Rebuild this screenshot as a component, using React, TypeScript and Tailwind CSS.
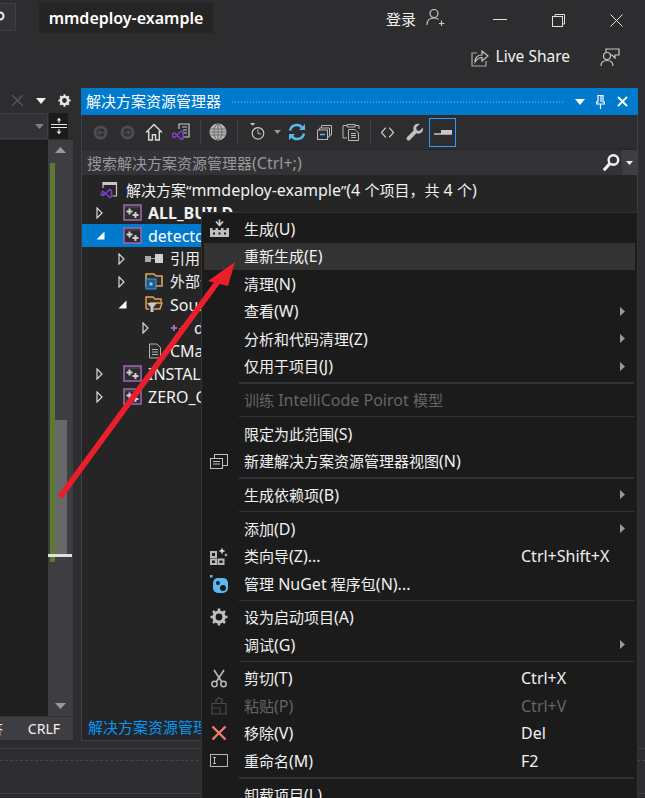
import React from "react";

const Mixed = ({ text }: { text: string }) => (
  <>
    {text.split(/([\u0000-\u02ff]+)/).map((part, i) =>
      i % 2 === 1 ? (
        <span key={i} className="text-[16px]">{part}</span>
      ) : (
        <React.Fragment key={i}>{part}</React.Fragment>
      )
    )}
  </>
);

const Tri = ({ open }: { open?: boolean }) =>
  open ? (
    <svg width="9" height="9" viewBox="0 0 9 9"><path d="M8.5 .5V8.5H.5Z" fill="#fff" /></svg>
  ) : (
    <svg width="7" height="12" viewBox="0 0 7 12"><path d="M1 1L6 6L1 11Z" fill="#252526" stroke="#d8d8d8" strokeWidth="1.2" /></svg>
  );

const ProjectIcon = () => (
  <svg width="19" height="17" viewBox="0 0 19 17">
    <rect x="1" y="1" width="17" height="15" fill="#2d2d30" stroke="#a765b6" strokeWidth="1.5" />
    <rect x="2" y="2" width="15" height="2" fill="#3f3f42" />
    <path d="M6.5 4.5v6M3.5 7.5h6M12.5 8v6M9.5 11h6" stroke="#d0d0d0" strokeWidth="2" />
  </svg>
);

const VsMark = ({ c = "#7b3fc4" }: { c?: string }) => (
  <path d="M1 11.5L3 10.5L5.5 12.5L10 8.5L11.5 9.5V15.5L10 16.5L5.5 12.5M5.5 12.5L3 14.5L1 13.5Z" fill="none" stroke={c} strokeWidth="1.6" />
);

const SolutionIcon = () => (
  <svg width="18" height="18" viewBox="0 0 18 18">
    <path d="M3 7V1.5H16.5V15H12.5" fill="none" stroke="#c8c8c8" strokeWidth="1.2" />
    <rect x="3" y="1" width="14" height="3" fill="#c8c8c8" />
    <VsMark />
  </svg>
);

const tree = [
  { key: "a", pad: "pl-[14px]", exp: "closed", icon: "project", label: "ALL_BUILD", bold: true },
  { key: "b", pad: "pl-[14px]", exp: "open", icon: "project", label: "detector", sel: true },
  { key: "c", pad: "pl-[36px]", exp: "closed", icon: "ref", label: "引用" },
  { key: "d", pad: "pl-[36px]", exp: "closed", icon: "ext", label: "外部依赖项" },
  { key: "e", pad: "pl-[36px]", exp: "open", icon: "filter", label: "Source Files" },
  { key: "f", pad: "pl-[60px]", exp: "closed", icon: "cpp", label: "detector.cpp" },
  { key: "g", pad: "pl-[36px]", exp: "none", icon: "doc", label: "CMakeLists.txt" },
  { key: "h", pad: "pl-[14px]", exp: "closed", icon: "project", label: "INSTALL" },
  { key: "i", pad: "pl-[14px]", exp: "closed", icon: "project", label: "ZERO_CHECK" },
];

const TreeIcon = ({ t }: { t: string }) => {
  if (t === "project") return <ProjectIcon />;
  if (t === "ref")
    return (
      <svg width="18" height="12" viewBox="0 0 18 12">
        <rect x="0" y="3" width="6" height="6" fill="#a8a8a8" />
        <rect x="10" y="1" width="8" height="9" fill="#d0d0d0" />
        <path d="M6 5.5h4" stroke="#a8a8a8" />
      </svg>
    );
  if (t === "ext")
    return (
      <svg width="18" height="17" viewBox="0 0 18 17">
        <path d="M1 1H9L11 3H17V13H1Z" fill="#2d2d30" stroke="#d9a860" strokeWidth="1.6" />
        <rect x="1" y="6" width="10" height="10" fill="#1e5a85" stroke="#3f9bd8" />
        <rect x="4.5" y="9.5" width="3" height="3" fill="#8ec8ee" />
      </svg>
    );
  if (t === "filter")
    return (
      <svg width="18" height="17" viewBox="0 0 18 17">
        <path d="M1 13V1H8L10 3H16V6M1 13H4M9 13H15L17 7H5" fill="#3a3020" stroke="#d9a860" strokeWidth="1.4" />
        <path d="M2 7H12L8.5 11V16H5.5V11Z" fill="#c8c8c8" />
      </svg>
    );
  if (t === "cpp")
    return (
      <svg width="19" height="12" viewBox="0 0 19 12">
        <path d="M5 3v6M2 6h6M13 4v6M10 7h6" stroke="#a866b8" strokeWidth="2" />
      </svg>
    );
  return (
    <svg className="ml-[3px]" width="14" height="16" viewBox="0 0 14 16">
      <path d="M1.5 1H9L12.5 4.5V15H1.5Z" fill="#2d2d30" stroke="#b0b0b0" />
      <path d="M4 6.5H10M4 9H10M4 11.5H10" stroke="#b0b0b0" />
    </svg>
  );
};

const MIcon = ({ t }: { t?: string }) => {
  switch (t) {
    case "build":
      return (
        <svg width="19" height="19" viewBox="0 0 19 19">
          <path d="M9.5 .5V5M6 2.5L9.5 6.5L13 2.5" fill="none" stroke="#c8c8c8" strokeWidth="1.8" />
          <path d="M0 18V9H2.5V11H5.5V9H8V11H11V9H13.5V11H16.5V9H19V18Z" fill="#c0c0c0" />
          <path d="M3 13.5h2v2H3zM8.5 13.5h2v2h-2zM14 13.5h2v2h-2z" fill="#1b1b1c" />
        </svg>
      );
    case "view":
      return (
        <svg width="18" height="16" viewBox="0 0 18 16">
          <rect x="4.5" y="1.5" width="13" height="11" fill="#1b1b1c" stroke="#c0c0c0" />
          <rect x="0.5" y="5.5" width="12" height="10" fill="#1b1b1c" stroke="#c0c0c0" />
          <path d="M3 8.5H10M3 11H10" stroke="#c0c0c0" />
        </svg>
      );
    case "wizard":
      return (
        <svg width="18" height="18" viewBox="0 0 18 18">
          <rect x="0" y="4" width="7" height="7" fill="#b8b8b8" />
          <rect x="0" y="11.5" width="7" height="6.5" fill="#b8b8b8" />
          <rect x="7.5" y="11.5" width="7" height="6.5" fill="#b8b8b8" />
          <path d="M2 6h3v3H2zM2 13.5h3v2.5H2zM9.5 13.5h3v2.5h-3z" fill="#1b1b1c" />
          <path d="M12 0.5L13 3L15.5 4L13 5L12 7.5L11 5L8.5 4L11 3Z" fill="#d8d8d8" />
          <path d="M16 6l.6 1.4 1.4.6-1.4.6-.6 1.4-.6-1.4-1.4-.6 1.4-.6z" fill="#d8d8d8" />
        </svg>
      );
    case "nuget":
      return (
        <svg width="18" height="18" viewBox="0 0 18 18">
          <rect x="0" y="0" width="2.5" height="2.5" fill="#5cb8f0" />
          <rect x="3" y="3" width="15" height="15" rx="5" fill="#5cb8f0" />
          <circle cx="8" cy="8" r="2" fill="#1b1b1c" />
          <circle cx="13" cy="13" r="3" fill="#1b1b1c" />
        </svg>
      );
    case "gear":
      return (
        <svg width="18" height="18" viewBox="0 0 18 18">
          <circle cx="9" cy="9" r="5" fill="none" stroke="#c0c0c0" strokeWidth="3.2" />
          <path d="M9 0.5V3M9 15V17.5M0.5 9H3M15 9H17.5M3 3L4.8 4.8M13.2 13.2L15 15M15 3L13.2 4.8M4.8 13.2L3 15" stroke="#c0c0c0" strokeWidth="2.6" />
        </svg>
      );
    case "cut":
      return (
        <svg width="16" height="19" viewBox="0 0 16 19">
          <path d="M3 1L10.5 12.5M13 1L5.5 12.5" stroke="#b8b8b8" strokeWidth="1.7" />
          <circle cx="3.5" cy="15" r="2.7" fill="none" stroke="#b8b8b8" strokeWidth="1.5" />
          <circle cx="12.5" cy="15" r="2.7" fill="none" stroke="#b8b8b8" strokeWidth="1.5" />
        </svg>
      );
    case "paste":
      return (
        <svg width="16" height="18" viewBox="0 0 16 18">
          <path d="M1 6.5H15V17H1ZM5 6V3L8 0.5L11 3V6M1 11H9V17" fill="none" stroke="#4a4a4c" strokeWidth="1.2" />
        </svg>
      );
    case "remove":
      return (
        <svg width="16" height="16" viewBox="0 0 16 16">
          <path d="M1.5 1.5L14.5 14.5M14.5 1.5L1.5 14.5" stroke="#ee7f6b" strokeWidth="2.4" />
        </svg>
      );
    case "rename":
      return (
        <svg width="18" height="13" viewBox="0 0 18 13">
          <rect x="0.5" y="0.5" width="17" height="12" fill="none" stroke="#b8b8b8" />
          <path d="M3 3.5H6M3 9.5H6M4.5 3.5V9.5" stroke="#b8b8b8" />
        </svg>
      );
    default:
      return null;
  }
};

type M =
  | { sep: "thin" | "thick" }
  | { label: string; icon?: string; shortcut?: string; arrow?: boolean; disabled?: boolean; hover?: boolean };

const menu: M[] = [
  { label: "生成(U)", icon: "build" },
  { label: "重新生成(E)", hover: true },
  { label: "清理(N)" },
  { label: "查看(W)", arrow: true },
  { label: "分析和代码清理(Z)", arrow: true },
  { label: "仅用于项目(J)", arrow: true },
  { sep: "thick" },
  { label: "训练 IntelliCode Poirot 模型", disabled: true },
  { sep: "thin" },
  { label: "限定为此范围(S)" },
  { label: "新建解决方案资源管理器视图(N)", icon: "view" },
  { sep: "thick" },
  { label: "生成依赖项(B)", arrow: true },
  { sep: "thin" },
  { label: "添加(D)", arrow: true },
  { label: "类向导(Z)...", icon: "wizard", shortcut: "Ctrl+Shift+X" },
  { label: "管理 NuGet 程序包(N)...", icon: "nuget" },
  { sep: "thin" },
  { label: "设为启动项目(A)", icon: "gear" },
  { label: "调试(G)", arrow: true },
  { sep: "thin" },
  { label: "剪切(T)", icon: "cut", shortcut: "Ctrl+X" },
  { label: "粘贴(P)", icon: "paste", shortcut: "Ctrl+V", disabled: true },
  { label: "移除(V)", icon: "remove", shortcut: "Del" },
  { label: "重命名(M)", icon: "rename", shortcut: "F2" },
  { sep: "thick" },
  { label: "卸载项目(L)" },
];

const ToolSep = () => <div className="w-px h-[24px] bg-[#3f3f46]" />;

export default function App() {
  return (
    <div className="relative w-[645px] h-[798px] overflow-hidden bg-[#2d2d30] flex flex-col text-[#f1f1f1] text-[15px] leading-none font-['Noto_Sans','Noto_Sans_CJK_SC',sans-serif]">
      {/* title bar */}
      <div className="h-[42px] flex items-start shrink-0">
        <div className="mt-[3px] w-[16px] h-[28px] bg-[#333337] border border-[#3f3f46] border-l-0 flex items-center overflow-hidden">
          <svg className="shrink-0 -ml-[4px]" width="10" height="12" viewBox="0 0 10 12"><circle cx="4" cy="5" r="3.5" fill="none" stroke="#f1f1f1" strokeWidth="2" /></svg>
        </div>
        <div className="ml-[23px] mt-[3px] w-[174px] h-[30px] bg-[#252526] flex items-center justify-center font-semibold text-[16px] text-white whitespace-nowrap">mmdeploy-example</div>
        <div className="flex-1" />
        <div className="mt-[12px] text-[15px] text-[#f1f1f1]">登录</div>
        <svg className="ml-[10px] mt-[8px]" width="20" height="19" viewBox="0 0 20 19">
          <circle cx="8" cy="5.5" r="4" fill="none" stroke="#c8c8c8" strokeWidth="1.2" />
          <path d="M1 17C1 12 4 10 8 10C10 10 11.5 10.5 12.5 11.5M15.5 12.5V18M13 15.5H18.5" fill="none" stroke="#c8c8c8" strokeWidth="1.2" />
        </svg>
        <svg className="ml-[47px] mt-[19px]" width="14" height="2" viewBox="0 0 14 2"><path d="M0 .5H14" stroke="#e0e0e0" /></svg>
        <svg className="ml-[45px] mt-[14px]" width="13" height="13" viewBox="0 0 13 13">
          <path d="M3 2.5V.5H12.5V10H10.5" fill="none" stroke="#e0e0e0" />
          <rect x="0.5" y="2.5" width="10" height="10" fill="none" stroke="#e0e0e0" />
        </svg>
        <svg className="ml-[45px] mr-[22px] mt-[14px]" width="13" height="13" viewBox="0 0 13 13"><path d="M.5 .5L12.5 12.5M12.5 .5L.5 12.5" stroke="#e0e0e0" /></svg>
      </div>

      {/* command bar */}
      <div className="h-[45px] shrink-0 flex items-center justify-end pr-[25px] pb-[15px]">
        <svg width="18" height="19" viewBox="0 0 18 19">
          <path d="M6 5H1V18H15V13" fill="none" stroke="#a8a8a8" strokeWidth="1.2" />
          <path d="M4 14C4 9 7 7 11 7V3L17 8L11 13V9.5C8 9.5 6 11 4 14Z" fill="none" stroke="#c8c8c8" strokeWidth="1.2" />
        </svg>
        <span className="ml-[7px] text-[#f1f1f1] text-[15.5px]">Live Share</span>
        <svg className="ml-[30px]" width="20" height="19" viewBox="0 0 20 19">
          <circle cx="7" cy="8" r="3.5" fill="none" stroke="#c8c8c8" strokeWidth="1.2" />
          <path d="M1 18C1 14 4 12.5 7 12.5C10 12.5 13 14 13 18M6 4V1H19V7H15V10L12 7H11" fill="none" stroke="#c8c8c8" strokeWidth="1.2" />
        </svg>
      </div>

      {/* main */}
      <div className="h-[653px] shrink-0 flex">
        <div className="w-[73px] flex flex-col shrink-0">
          <div className="h-[26px] flex items-center pt-[1px]">
            <svg className="ml-[11px]" width="13" height="13" viewBox="0 0 13 13"><path d="M1 1L12 12M12 1L1 12" stroke="#555558" strokeWidth="1.5" /></svg>
            <svg className="ml-[12px]" width="10" height="6" viewBox="0 0 10 6"><path d="M0 0H10L5 6Z" fill="#f1f1f1" /></svg>
            <svg className="ml-[12px]" width="13" height="13" viewBox="0 0 18 18">
              <circle cx="9" cy="9" r="5" fill="none" stroke="#e8e8e8" strokeWidth="3.4" />
              <path d="M9 0.5V3M9 15V17.5M0.5 9H3M15 9H17.5M3 3L4.8 4.8M13.2 13.2L15 15M15 3L13.2 4.8M4.8 13.2L3 15" stroke="#e8e8e8" strokeWidth="2.8" />
            </svg>
          </div>
          <div className="h-[27px] flex">
            <div className="w-[48px] h-[26px] bg-[#333337] border border-[#3f3f46] border-l-0 flex items-center justify-end pr-[3px]">
              <svg width="9" height="5" viewBox="0 0 9 5"><path d="M0 0H9L4.5 5Z" fill="#808080" /></svg>
            </div>
            <div className="ml-px w-[19px] h-[26px] bg-[#1b1b1c] flex items-center justify-center">
              <svg width="16" height="18" viewBox="0 0 16 18">
                <path d="M0 7.5H16M0 10.5H16" stroke="#e8e8e8" />
                <path d="M8 1V6M8 12V17" stroke="#e8e8e8" />
                <path d="M5.5 3.5L8 1L10.5 3.5ZM5.5 14.5L8 17L10.5 14.5Z" fill="#e8e8e8" />
              </svg>
            </div>
          </div>
          <div className="flex-1 flex min-h-0">
            <div className="w-[48px] bg-[#1e1e1e]" />
            <div className="relative flex-1 bg-[#3e3e42] flex flex-col items-center justify-between py-[7px]">
              <svg width="11" height="6" viewBox="0 0 11 6"><path d="M0 6L5.5 0L11 6Z" fill="#999999" /></svg>
              <svg width="11" height="6" viewBox="0 0 11 6"><path d="M0 0L5.5 6L11 0Z" fill="#999999" /></svg>
              <div className="absolute left-[2px] top-[23px] w-[5px] h-[399px] bg-[#5a7a32]" />
              <div className="absolute left-[7px] top-[280px] w-[12px] h-[135px] bg-[#686868]" />
              <div className="absolute left-0 top-[414px] w-[24px] h-[3px] bg-[#e0e0e0]" />
            </div>
          </div>
          <div className="h-[24px] bg-[#3e3e42] border-t border-[#333337] flex items-center justify-between pr-[13px] text-[14px] text-[#f1f1f1]">
            <span className="-ml-[11px] w-[14px] overflow-hidden whitespace-nowrap">答</span>
            <span>CRLF</span>
          </div>
        </div>

        <div className="ml-[8px] w-[557px] shrink-0 flex flex-col border border-[#3f3f46] border-t-0 h-[653px] mt-px bg-[#252526]">
          <div className="h-[27px] -mx-px shrink-0 bg-[#007acc] flex items-center pl-[5px] text-white text-[15px] whitespace-nowrap">
            <span className="shrink-0">解决方案资源管理器</span>
            <div className="ml-[10px] w-[334px] shrink-0 h-[4px] bg-[radial-gradient(#3f9fdd_1px,transparent_1px)] bg-[length:3px_4px]" />
            <svg className="ml-[10px] shrink-0" width="10" height="6" viewBox="0 0 10 6"><path d="M0 0H10L5 6Z" fill="#fff" /></svg>
            <svg className="ml-[11px] shrink-0" width="9" height="14" viewBox="0 0 9 14"><path d="M2 .5H7V7H8.5V9H.5V7H2ZM4.5 9V14M5 1V7" fill="none" stroke="#fff" strokeWidth="1.2" /></svg>
            <svg className="ml-[12px] shrink-0" width="11" height="11" viewBox="0 0 11 11"><path d="M1 1L10 10M10 1L1 10" stroke="#fff" strokeWidth="1.8" /></svg>
          </div>

          <div className="h-[34px] shrink-0 bg-[#2d2d30] flex items-center">
            <svg className="ml-[11px]" width="15" height="15" viewBox="0 0 15 15">
              <circle cx="7.5" cy="7.5" r="5.5" fill="none" stroke="#4d4d50" strokeWidth="3" />
              <path d="M11 7.5H5M7.5 5L5 7.5L7.5 10" fill="none" stroke="#4d4d50" strokeWidth="1.5" />
            </svg>
            <svg className="ml-[12px]" width="15" height="15" viewBox="0 0 15 15">
              <circle cx="7.5" cy="7.5" r="5.5" fill="none" stroke="#4d4d50" strokeWidth="3" />
              <path d="M4 7.5H10M7.5 5L10 7.5L7.5 10" fill="none" stroke="#4d4d50" strokeWidth="1.5" />
            </svg>
            <svg className="ml-[10px]" width="18" height="18" viewBox="0 0 17 17">
              <path d="M1 9L8.5 1.5L16 9M3.5 7.5V16H7V11H10V16H13.5V7.5" fill="none" stroke="#d8d8d8" strokeWidth="1.4" />
            </svg>
            <svg className="ml-[9px]" width="18" height="18" viewBox="0 0 18 18">
              <path d="M7 6V1H17V14H11" fill="none" stroke="#c8c8c8" strokeWidth="1.2" />
              <path d="M10 4H15M11 7H15M11 10H15" stroke="#c8c8c8" />
              <path d="M.5 11L2.5 10L5 12L9.5 8L11 9V15.5L9.5 16.5L5 12.5L2.5 14.5L.5 13.5Z" fill="none" stroke="#7b3fc4" strokeWidth="1.6" />
            </svg>
            <div className="ml-[10px]"><ToolSep /></div>
            <svg className="ml-[8px]" width="18" height="18" viewBox="0 0 18 18">
              <circle cx="9" cy="9" r="8.5" fill="#b8b8b8" />
              <ellipse cx="9" cy="9" rx="4" ry="8" fill="none" stroke="#6a6a6a" />
              <path d="M1 6H17M1 9H17M1 12H17M9 1V17" stroke="#6a6a6a" />
            </svg>
            <div className="ml-[10px]"><ToolSep /></div>
            <svg className="ml-[12px]" width="16" height="20" viewBox="0 0 18 20">
              <path d="M0 0H6L3 3Z" fill="#c8c8c8" />
              <circle cx="9" cy="11.5" r="6.5" fill="none" stroke="#c8c8c8" strokeWidth="1.3" />
              <path d="M9 7V12H12.5" fill="none" stroke="#c8c8c8" />
            </svg>
            <svg className="ml-[8px]" width="7" height="4" viewBox="0 0 7 4"><path d="M0 0H7L3.5 4Z" fill="#999" /></svg>
            <svg className="ml-[7px]" width="18" height="18" viewBox="0 0 18 18">
              <path d="M2 7.5C3 3.5 6 2 9 2C11 2 13 3 14 4.5M16 10.5C15 14.5 12 16 9 16C7 16 5 15 4 13.5" fill="none" stroke="#5cb8f0" strokeWidth="2.6" />
              <path d="M17 1V7H11ZM1 17V11H7Z" fill="#5cb8f0" />
            </svg>
            <svg className="ml-[11px]" width="15" height="15" viewBox="0 0 15 15">
              <path d="M4.5 3V.5H14.5V10H12.5M2.5 5V3H12.5V12H11" fill="none" stroke="#b8b8b8" />
              <rect x="0.5" y="5" width="10" height="9.5" fill="#2d2d30" stroke="#b8b8b8" />
              <path d="M3 9.5H8" stroke="#5cb8f0" strokeWidth="1.5" />
            </svg>
            <svg className="ml-[10px]" width="18" height="18" viewBox="0 0 18 18">
              <path d="M5 15H1V2.5H5M13 2.5H17V6" fill="none" stroke="#b8b8b8" />
              <path d="M5 1.5H13V4H5Z" fill="none" stroke="#b8b8b8" />
              <path d="M6.5 6.5H13L16.5 10V17.5H6.5Z" fill="#2d2d30" stroke="#b8b8b8" />
              <path d="M9 10.5H14M9 12.5H14M9 14.5H14" stroke="#b8b8b8" />
            </svg>
            <div className="ml-[10px]"><ToolSep /></div>
            <svg className="ml-[9px]" width="15" height="11" viewBox="0 0 12 10"><path d="M4.5 .5L.5 5L4.5 9.5M7.5 .5L11.5 5L7.5 9.5" fill="none" stroke="#d0d0d0" strokeWidth="1.1" /></svg>
            <svg className="ml-[11px]" width="18" height="18" viewBox="0 0 16 16">
              <path d="M15 4L12 7L9.5 6.5L9 4L12 1C9.5 .2 6.5 1.5 6.5 5C6.5 5.7 6.6 6.2 6.8 6.7L1 12.5C.3 13.2 .3 14.2 1 15C1.7 15.7 2.8 15.7 3.5 15L9.3 9.2C12.5 10.3 16 8 15 4Z" fill="#c0c0c0" />
            </svg>
            <div className="ml-[5px] w-[27px] h-[29px] border border-[#3399ff] flex items-end justify-center pb-[11px]">
              <svg width="18" height="5" viewBox="0 0 18 5"><path d="M0 4H18" stroke="#c8c8c8" strokeWidth="1.5" /><rect x="7" y="0" width="11" height="4" fill="#c8c8c8" /></svg>
            </div>
          </div>

          <div className="h-[27px] shrink-0 bg-[#333337] border-y border-[#252526] flex items-center pl-[5px] text-[15px] text-[#999999]">
            <span className="flex-1"><Mixed text="搜索解决方案资源管理器(Ctrl+;)" /></span>
            <svg width="18" height="18" viewBox="0 0 14 15"><circle cx="9" cy="5" r="4" fill="none" stroke="#f1f1f1" strokeWidth="2" /><path d="M6 8L1 13.5" stroke="#f1f1f1" strokeWidth="2.6" /></svg>
            <div className="ml-[2px] w-[15px] self-stretch bg-[#3e3e42] flex items-center justify-center">
              <svg width="7" height="4" viewBox="0 0 7 4"><path d="M0 0H7L3.5 4Z" fill="#f1f1f1" /></svg>
            </div>
          </div>

          <div className="flex-1 min-h-0 flex flex-col pt-[2px]">
            <div className="h-[23px] flex items-center pl-[18px] text-[15px] text-[#f1f1f1] whitespace-nowrap">
              <SolutionIcon />
              <span className="ml-[8px]"><Mixed text="解决方案“mmdeploy-example”(4 个项目，共 4 个)" /></span>
            </div>
            {tree.map((r) => (
              <div key={r.key} className={`h-[23px] shrink-0 flex items-center whitespace-nowrap ${r.pad} ${r.sel ? "bg-[#007acc] text-white" : "text-[#f1f1f1]"} ${r.bold ? "font-bold" : ""}`}>
                <div className="w-[9px] flex justify-start">{r.exp === "none" ? null : <Tri open={r.exp === "open"} />}</div>
                <div className="ml-[18px] w-[19px] flex justify-start"><TreeIcon t={r.icon} /></div>
                <span className="ml-[6px]"><Mixed text={r.label} /></span>
              </div>
            ))}
            <div className="mt-auto h-[26px] flex items-center pl-[6px] text-[15px] text-[#0097fb] whitespace-nowrap">解决方案资源管理器</div>
          </div>
        </div>
      </div>

      {/* lower panel */}
      <div className="flex-1 flex flex-col pt-[8px]">
        <div className="h-px bg-[#3f3f46]" />
        <div className="mt-[11px] border-t border-dashed border-[#46464a]" />
        <div className="mt-[32px] h-px bg-[#3f3f46]" />
      </div>

      {/* context menu */}
      <div className="absolute left-[201px] top-[212px] w-[437px] h-[600px] bg-[#1b1b1c] border border-[#333337] pt-[2px] px-[2px] text-[#f1f1f1]">
        {menu.map((m, i) =>
          "sep" in m ? (
            <div key={i} className="h-[6.2px] flex items-center pl-[35px] pr-[1px]">
              <div className={`w-full ${m.sep === "thick" ? "h-[2px]" : "h-px"} bg-[#333337]`} />
            </div>
          ) : (
            <div key={i} className={`h-[27.5px] flex items-center whitespace-nowrap ${m.hover ? "bg-[#333334]" : ""} ${m.disabled ? "text-[#656565]" : ""}`}>
              <div className="w-[30px] h-full flex items-center justify-center"><MIcon t={m.icon} /></div>
              <span className="ml-[10px] flex-1"><Mixed text={m.label} /></span>
              <div className="w-[114px] h-full flex items-center justify-between pr-[10px] text-[16px]">
                <span>{m.shortcut}</span>
                {m.arrow && <svg width="5" height="9" viewBox="0 0 5 9"><path d="M0 0L5 4.5L0 9Z" fill="#999999" /></svg>}
              </div>
            </div>
          )
        )}
      </div>

      {/* annotation arrow */}
      <svg className="absolute left-0 top-0 pointer-events-none" width="645" height="798" viewBox="0 0 645 798">
        <path d="M60 497L222 276" stroke="#ea1f2b" strokeWidth="5.5" />
        <path d="M235 262L208 281L228 286Z" fill="#ea1f2b" />
      </svg>
    </div>
  );
}
